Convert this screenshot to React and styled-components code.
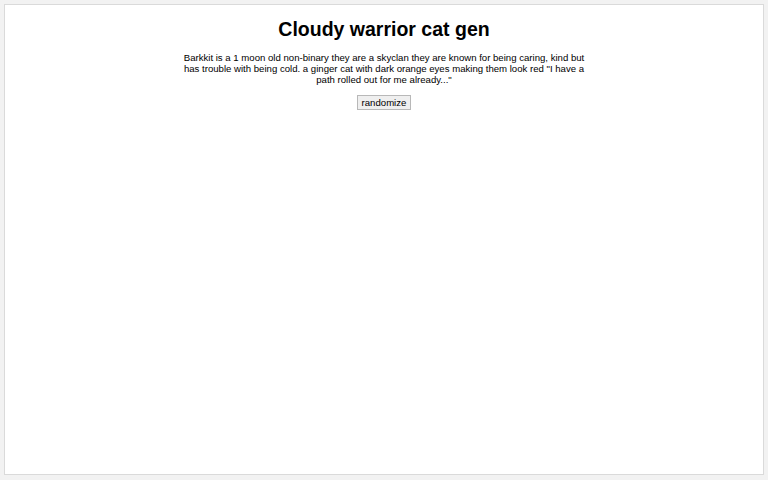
import React, { useState } from "react"
import styled, { createGlobalStyle } from "styled-components"

const GlobalStyle = createGlobalStyle`
    html, body {
        margin: 0;
        padding: 0;
        height: 100%;
        background: #f2f2f2;
        font-family: "Liberation Sans", Arial, sans-serif;
    }
    #root {
        height: 100%;
    }
`

const defaultCat =
    'Barkkit is a 1 moon old non-binary they are a skyclan they are known for being caring, kind but has trouble with being cold. a ginger cat with dark orange eyes making them look red "I have a path rolled out for me already..."'

const App = () => {
    const [cat, setCat] = useState(defaultCat)                  // text shown under the title

    return (
        <>
        <GlobalStyle />
        <Page>
            <Panel>
                <Title>Cloudy warrior cat gen</Title>
                <Description>{cat}</Description>
                <RandomButton onClick={() => setCat(defaultCat)}>randomize</RandomButton>
            </Panel>
        </Page>
        </>
    )
}

export default App


//-----------------------------------------------STYLES-----------------------------------------------//


const Page = styled.div`
    box-sizing: border-box;
    height: 100%;
    padding: 4px 4px 5px 4px;
    display: flex;
`
const Panel = styled.div`
    flex: 1;
    background: #ffffff;
    border: 1px solid #dadada;
    display: flex;
    flex-direction: column;
    align-items: center;
    padding-top: 13px;
`
const Title = styled.h1`
    margin: 0 0 12px 0;
    font-size: 19.5px;
    line-height: 22px;
    font-weight: bold;
    color: #000;
`
const Description = styled.p`
    margin: 0 0 10px 0;
    max-width: 402px;
    text-align: center;
    font-size: 9.6px;
    line-height: 11px;
    color: #000;
`
const RandomButton = styled.button`
    font-family: "Liberation Sans", Arial, sans-serif;
    font-size: 9.6px;
    color: #000;
    background: #efefef;
    border: 1px solid #b8b8b8;
    padding: 1px 4px;
    line-height: 11px;
`
